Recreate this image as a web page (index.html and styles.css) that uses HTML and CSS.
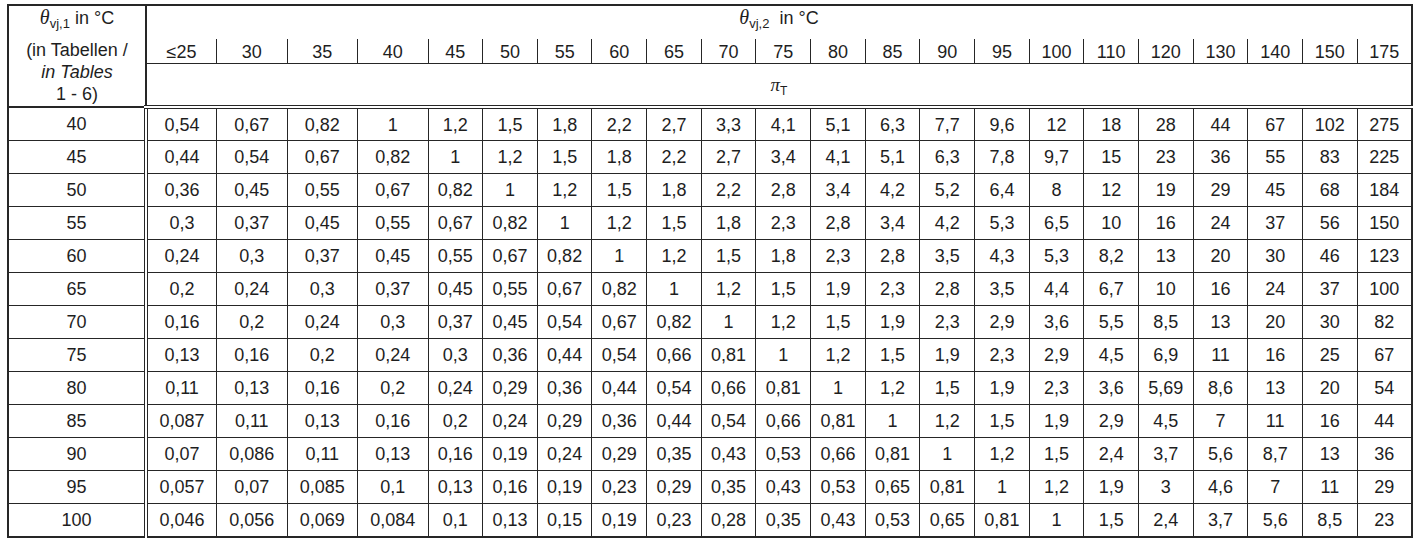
FILE: index.html
```html
<!DOCTYPE html>
<html lang="de">
<head>
<meta charset="utf-8">
<title>πT Tabelle</title>
<link rel="stylesheet" href="styles.css">
</head>
<body>
<table class="pi-table">
  <colgroup>
    <col class="c-head">
    <col class="c-wide"><col class="c-wide"><col class="c-wide"><col class="c-wide">
    <col><col><col><col><col><col><col><col><col><col><col><col><col><col><col><col><col><col>
  </colgroup>
  <thead>
    <tr class="r-title">
      <th class="corner" rowspan="3">
        <span class="cl cl-first"><i class="sym">θ</i><span class="sub">vj,1</span> in °C</span>
        <span class="cl">(in Tabellen /</span>
        <span class="cl"><i>in Tables</i></span>
        <span class="cl">1 - 6)</span>
      </th>
      <th class="title" colspan="22"><i class="sym">θ</i><span class="sub">vj,2</span><span class="gap"></span>in °C</th>
    </tr>
    <tr class="r-labels">
      <th class="lbl">≤25</th><th class="lbl">30</th><th class="lbl">35</th><th class="lbl">40</th><th class="lbl">45</th><th class="lbl">50</th><th class="lbl">55</th><th class="lbl">60</th><th class="lbl">65</th><th class="lbl">70</th><th class="lbl">75</th><th class="lbl">80</th><th class="lbl">85</th><th class="lbl">90</th><th class="lbl">95</th><th class="lbl">100</th><th class="lbl">110</th><th class="lbl">120</th><th class="lbl">130</th><th class="lbl">140</th><th class="lbl">150</th><th class="lbl">175</th>
    </tr>
    <tr class="r-pi">
      <th class="pi" colspan="22"><i class="sym pi-sym">π</i><span class="sub sub-t">T</span></th>
    </tr>
  </thead>
  <tbody>
    <tr><th class="rowhead">40</th><td>0,54</td><td>0,67</td><td>0,82</td><td>1</td><td>1,2</td><td>1,5</td><td>1,8</td><td>2,2</td><td>2,7</td><td>3,3</td><td>4,1</td><td>5,1</td><td>6,3</td><td>7,7</td><td>9,6</td><td>12</td><td>18</td><td>28</td><td>44</td><td>67</td><td>102</td><td>275</td></tr>
    <tr><th class="rowhead">45</th><td>0,44</td><td>0,54</td><td>0,67</td><td>0,82</td><td>1</td><td>1,2</td><td>1,5</td><td>1,8</td><td>2,2</td><td>2,7</td><td>3,4</td><td>4,1</td><td>5,1</td><td>6,3</td><td>7,8</td><td>9,7</td><td>15</td><td>23</td><td>36</td><td>55</td><td>83</td><td>225</td></tr>
    <tr><th class="rowhead">50</th><td>0,36</td><td>0,45</td><td>0,55</td><td>0,67</td><td>0,82</td><td>1</td><td>1,2</td><td>1,5</td><td>1,8</td><td>2,2</td><td>2,8</td><td>3,4</td><td>4,2</td><td>5,2</td><td>6,4</td><td>8</td><td>12</td><td>19</td><td>29</td><td>45</td><td>68</td><td>184</td></tr>
    <tr><th class="rowhead">55</th><td>0,3</td><td>0,37</td><td>0,45</td><td>0,55</td><td>0,67</td><td>0,82</td><td>1</td><td>1,2</td><td>1,5</td><td>1,8</td><td>2,3</td><td>2,8</td><td>3,4</td><td>4,2</td><td>5,3</td><td>6,5</td><td>10</td><td>16</td><td>24</td><td>37</td><td>56</td><td>150</td></tr>
    <tr><th class="rowhead">60</th><td>0,24</td><td>0,3</td><td>0,37</td><td>0,45</td><td>0,55</td><td>0,67</td><td>0,82</td><td>1</td><td>1,2</td><td>1,5</td><td>1,8</td><td>2,3</td><td>2,8</td><td>3,5</td><td>4,3</td><td>5,3</td><td>8,2</td><td>13</td><td>20</td><td>30</td><td>46</td><td>123</td></tr>
    <tr><th class="rowhead">65</th><td>0,2</td><td>0,24</td><td>0,3</td><td>0,37</td><td>0,45</td><td>0,55</td><td>0,67</td><td>0,82</td><td>1</td><td>1,2</td><td>1,5</td><td>1,9</td><td>2,3</td><td>2,8</td><td>3,5</td><td>4,4</td><td>6,7</td><td>10</td><td>16</td><td>24</td><td>37</td><td>100</td></tr>
    <tr><th class="rowhead">70</th><td>0,16</td><td>0,2</td><td>0,24</td><td>0,3</td><td>0,37</td><td>0,45</td><td>0,54</td><td>0,67</td><td>0,82</td><td>1</td><td>1,2</td><td>1,5</td><td>1,9</td><td>2,3</td><td>2,9</td><td>3,6</td><td>5,5</td><td>8,5</td><td>13</td><td>20</td><td>30</td><td>82</td></tr>
    <tr><th class="rowhead">75</th><td>0,13</td><td>0,16</td><td>0,2</td><td>0,24</td><td>0,3</td><td>0,36</td><td>0,44</td><td>0,54</td><td>0,66</td><td>0,81</td><td>1</td><td>1,2</td><td>1,5</td><td>1,9</td><td>2,3</td><td>2,9</td><td>4,5</td><td>6,9</td><td>11</td><td>16</td><td>25</td><td>67</td></tr>
    <tr><th class="rowhead">80</th><td>0,11</td><td>0,13</td><td>0,16</td><td>0,2</td><td>0,24</td><td>0,29</td><td>0,36</td><td>0,44</td><td>0,54</td><td>0,66</td><td>0,81</td><td>1</td><td>1,2</td><td>1,5</td><td>1,9</td><td>2,3</td><td>3,6</td><td>5,69</td><td>8,6</td><td>13</td><td>20</td><td>54</td></tr>
    <tr><th class="rowhead">85</th><td>0,087</td><td>0,11</td><td>0,13</td><td>0,16</td><td>0,2</td><td>0,24</td><td>0,29</td><td>0,36</td><td>0,44</td><td>0,54</td><td>0,66</td><td>0,81</td><td>1</td><td>1,2</td><td>1,5</td><td>1,9</td><td>2,9</td><td>4,5</td><td>7</td><td>11</td><td>16</td><td>44</td></tr>
    <tr><th class="rowhead">90</th><td>0,07</td><td>0,086</td><td>0,11</td><td>0,13</td><td>0,16</td><td>0,19</td><td>0,24</td><td>0,29</td><td>0,35</td><td>0,43</td><td>0,53</td><td>0,66</td><td>0,81</td><td>1</td><td>1,2</td><td>1,5</td><td>2,4</td><td>3,7</td><td>5,6</td><td>8,7</td><td>13</td><td>36</td></tr>
    <tr><th class="rowhead">95</th><td>0,057</td><td>0,07</td><td>0,085</td><td>0,1</td><td>0,13</td><td>0,16</td><td>0,19</td><td>0,23</td><td>0,29</td><td>0,35</td><td>0,43</td><td>0,53</td><td>0,65</td><td>0,81</td><td>1</td><td>1,2</td><td>1,9</td><td>3</td><td>4,6</td><td>7</td><td>11</td><td>29</td></tr>
    <tr><th class="rowhead">100</th><td>0,046</td><td>0,056</td><td>0,069</td><td>0,084</td><td>0,1</td><td>0,13</td><td>0,15</td><td>0,19</td><td>0,23</td><td>0,28</td><td>0,35</td><td>0,43</td><td>0,53</td><td>0,65</td><td>0,81</td><td>1</td><td>1,5</td><td>2,4</td><td>3,7</td><td>5,6</td><td>8,5</td><td>23</td></tr>
  </tbody>
</table>
</body>
</html>
```

FILE: styles.css
```css
html, body {
  margin: 0;
  padding: 0;
  background: #ffffff;
}

body {
  font-family: "Liberation Sans", Arial, sans-serif;
  color: #1e1e1e;
}

.pi-table {
  border-collapse: collapse;
  table-layout: fixed;
  width: 1406px;
  margin: 4px 0 0 7px;
  border: 2px solid #262626;
  font-size: 18px;
  line-height: 22px;
}

.c-head {
  width: 138px;
}

.c-wide {
  width: 70.5px;
}

.pi-table th,
.pi-table td {
  padding: 0;
  text-align: center;
  font-weight: normal;
  white-space: nowrap;
}

/* header */
.corner {
  vertical-align: top;
  border-right: 2px solid #262626;
  border-bottom: 2px solid #262626;
  padding-top: 1px;
}

.cl {
  display: block;
  line-height: 22px;
}

.cl-first {
  margin-bottom: 10px;
}

.r-title .title {
  height: 33px;
  vertical-align: top;
  padding-top: 0;
}

.r-labels th {
  height: 20px;
  padding-top: 2px;
}

.lbl {
  border-left: 1px solid #262626;
  border-bottom: 1px solid #262626;
  vertical-align: middle;
}

.pi {
  height: 41px;
  border-bottom: 4px double #262626;
  vertical-align: middle;
}

.sym {
  font-family: "Liberation Serif", "DejaVu Serif", serif;
  font-style: italic;
  font-size: 20px;
}

.pi-sym {
  font-size: 19px;
}

.sub {
  font-size: 13px;
  vertical-align: -4px;
  line-height: 0;
}

.sub-t {
  font-size: 12px;
}

.gap {
  display: inline-block;
  width: 10px;
}

/* body */
.rowhead {
  height: 32px;
  border-right: 4px double #262626;
  border-bottom: 1px solid #262626;
  vertical-align: middle;
}

.pi-table td {
  border: 1px solid #262626;
  vertical-align: middle;
}
```
